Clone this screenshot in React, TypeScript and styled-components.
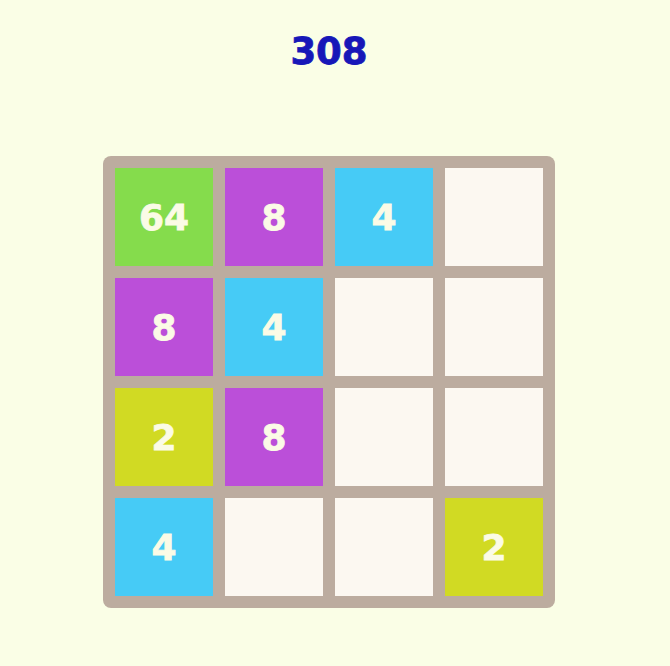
import React from "react";
import styled, { createGlobalStyle } from "styled-components";

const Global = createGlobalStyle`
  html, body {
    margin: 0;
    padding: 0;
    background: #fafee6;
  }
  body {
    font-family: "DejaVu Sans", Verdana, sans-serif;
  }
`;

const Page = styled.main`
  display: flex;
  flex-direction: column;
  align-items: center;
  padding: 0 12px 0 0;
  min-height: 666px;
  box-sizing: border-box;
`;

const Score = styled.h1`
  margin: 31px 0 0;
  height: 42px;
  line-height: 42px;
  font-size: 37px;
  font-weight: bold;
  color: #1717b8;
  -webkit-text-stroke: 0.8px #1717b8;
`;

const Board = styled.div`
  margin-top: 83px;
  display: grid;
  grid-template-columns: repeat(4, 98px);
  grid-auto-rows: 98px;
  gap: 12px;
  padding: 12px;
  background: #bcac9f;
  border-radius: 8px;
`;

const palette: Record<number, string> = {
  0: "#fcf8f1",
  2: "#d1da23",
  4: "#46cbf6",
  8: "#bb4fd9",
  64: "#85dc4c",
};

const Tile = styled.div<{ $value: number }>`
  display: flex;
  align-items: center;
  justify-content: center;
  background: ${(p) => palette[p.$value] ?? "#fcf8f1"};
  color: #fbfbe6;
  -webkit-text-stroke: 0.8px #fbfbe6;
  font-size: 36px;
  font-weight: bold;
`;

const grid = [
  [64, 8, 4, 0],
  [8, 4, 0, 0],
  [2, 8, 0, 0],
  [4, 0, 0, 2],
];

export default function App() {
  return (
    <>
      <Global />
      <Page>
        <Score>308</Score>
        <Board>
          {grid.flatMap((row, r) =>
            row.map((v, c) => (
              <Tile key={`${r}-${c}`} $value={v}>
                {v > 0 ? v : ""}
              </Tile>
            ))
          )}
        </Board>
      </Page>
    </>
  );
}
